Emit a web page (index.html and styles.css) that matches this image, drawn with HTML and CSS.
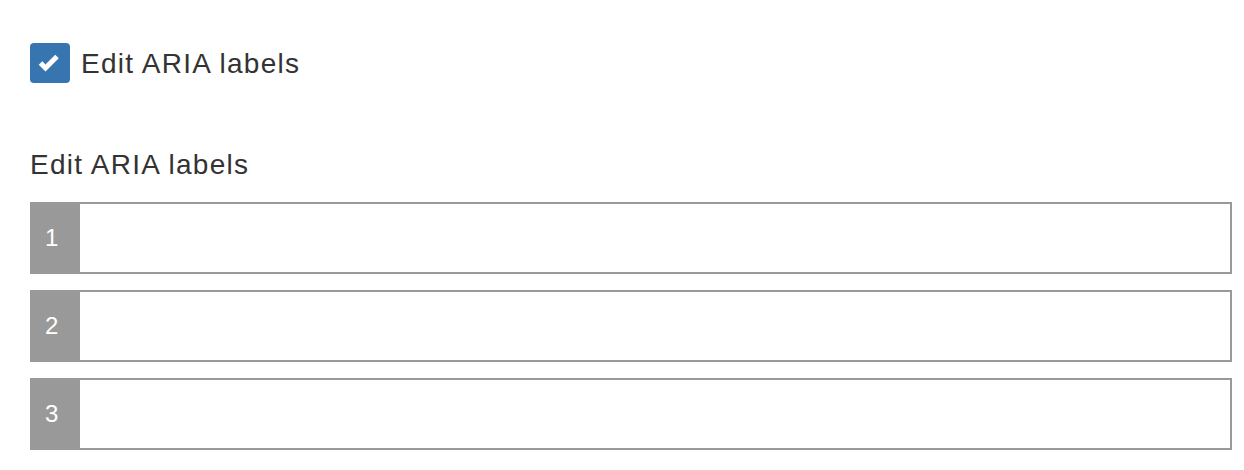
FILE: index.html
```html
<!DOCTYPE html>
<html>
<head>
<meta charset="utf-8">
<link rel="stylesheet" href="styles.css">
</head>
<body>
<div class="page">
  <label class="check-row">
    <span class="checkbox">
      <svg viewBox="0 0 40 40" width="40" height="40"><path d="M10.5 20 L15.5 25 L27 13.5" fill="none" stroke="#fff" stroke-width="5" stroke-linecap="butt" stroke-linejoin="miter"/></svg>
    </span>
    <span class="check-label">Edit ARIA labels</span>
  </label>
  <h2 class="heading">Edit ARIA labels</h2>
  <div class="rows">
    <div class="row"><span class="num">1</span><input class="field" type="text"></div>
    <div class="row"><span class="num">2</span><input class="field" type="text"></div>
    <div class="row"><span class="num">3</span><input class="field" type="text"></div>
  </div>
</div>
</body>
</html>
```
FILE: styles.css
```css
html, body {
  margin: 0;
  padding: 0;
  background: #fff;
}
.page {
  padding: 42px 12px 0 30px;
  font-family: "Liberation Sans", Arial, sans-serif;
  color: #333;
}
.check-row {
  display: flex;
  align-items: center;
  gap: 11px;
}
.checkbox {
  width: 40px;
  height: 40px;
  border-radius: 4px;
  background: #3775b0;
  display: block;
}
.checkbox svg {
  display: block;
}
.check-label {
  font-size: 28px;
  line-height: 40px;
  letter-spacing: 1.25px;
  padding-top: 2px;
}
.heading {
  margin: 64px 0 20px 0;
  font-size: 28px;
  line-height: 34px;
  font-weight: normal;
  letter-spacing: 1.25px;
}
.rows {
  display: flex;
  flex-direction: column;
  gap: 16px;
}
.row {
  display: flex;
  height: 72px;
  box-sizing: border-box;
  border: 2px solid #999;
  background: #fff;
}
.num {
  width: 48px;
  box-sizing: border-box;
  background: #999;
  color: #fff;
  font-size: 24px;
  display: flex;
  align-items: center;
  padding-left: 13px;
}
.field {
  flex: 1;
  border: none;
  outline: none;
  margin: 0;
  padding: 0 12px;
  font: inherit;
  background: #fff;
}
```
